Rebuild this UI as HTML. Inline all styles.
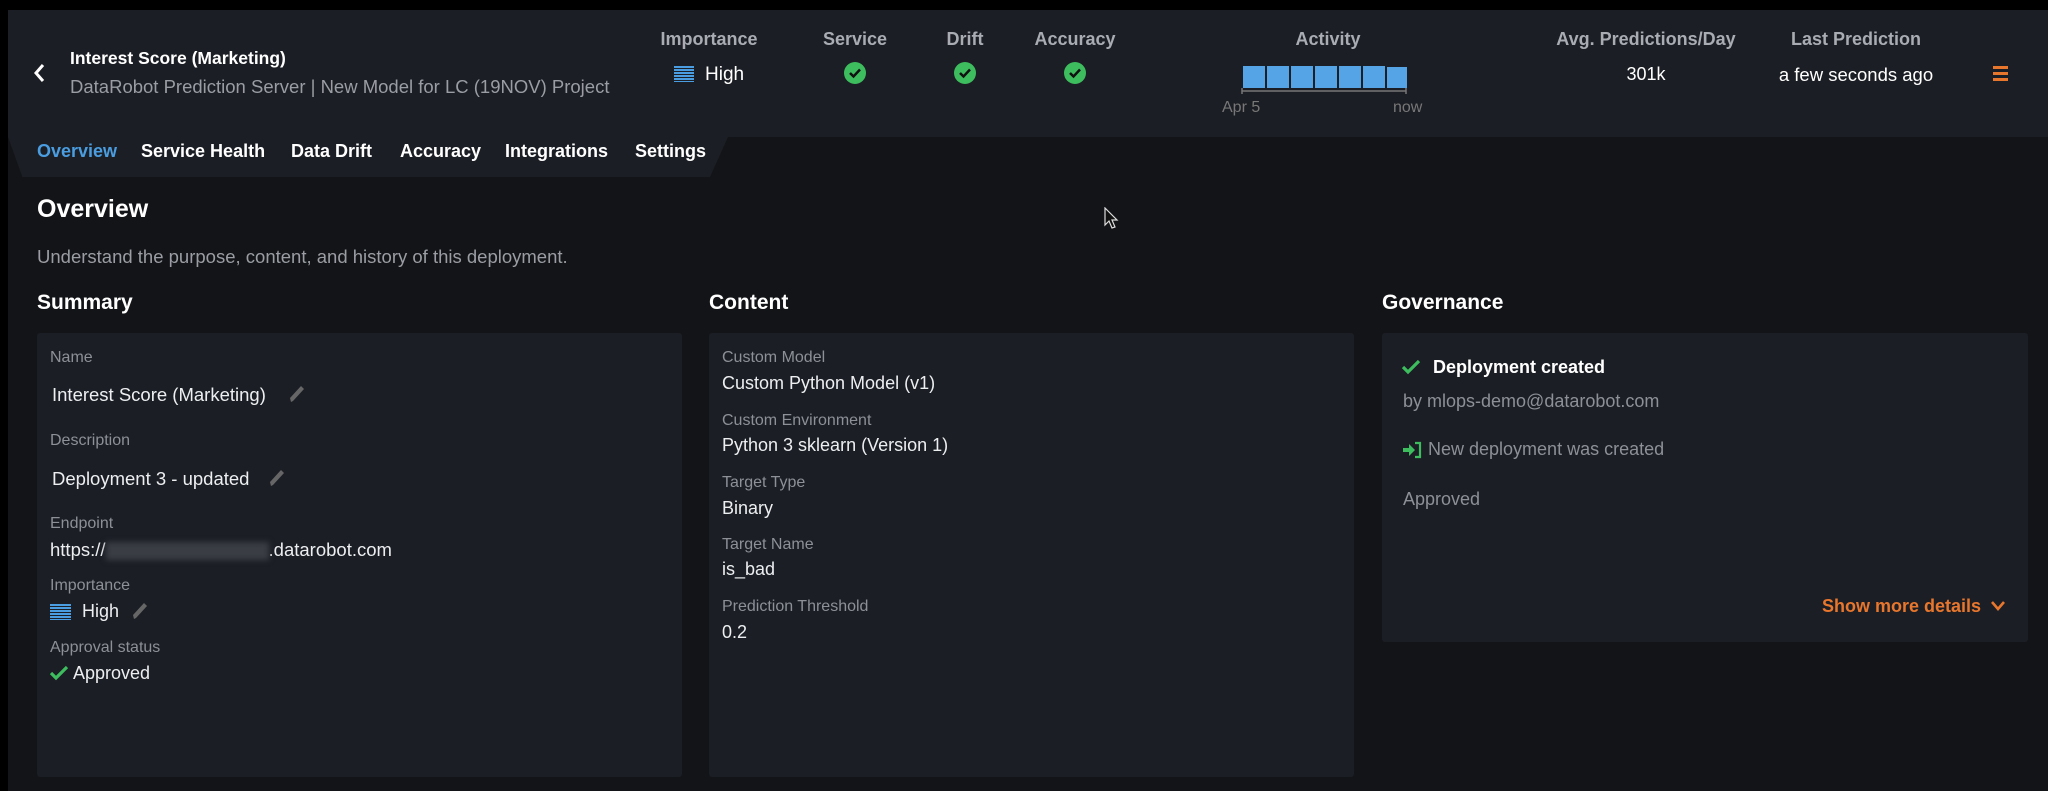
<!DOCTYPE html>
<html><head><meta charset="utf-8"><style>
*{margin:0;padding:0;box-sizing:border-box}
body{width:2048px;height:791px;background:#000;position:relative;overflow:hidden;font-family:"Liberation Sans",sans-serif;color:#e8e9eb}
.a{position:absolute;white-space:nowrap}
.main{position:absolute;left:8px;top:10px;right:0;bottom:0;background:#131417}
.hdr{position:absolute;left:8px;top:10px;right:0;height:127px;background:#1b1e24}
.tabs{position:absolute;left:8px;top:137px;width:720px;height:40px;background:#1b1e24;clip-path:polygon(0 0,100% 0,97.5% 100%,2% 100%)}
.lbl{color:#a9acb2;font-size:18px;font-weight:bold;text-align:center}
.card{position:absolute;background:#1b1e25;border-radius:3px}
.cl{color:#8d9097;font-size:16px}
.cv{color:#eceef0;font-size:18px}
.tab{font-size:18px;font-weight:bold;color:#fff;top:141px}
</style></head><body>
<div class="main"></div>
<div class="hdr"></div>
<div class="tabs"></div>

<svg class="a" style="left:32px;top:63px" width="14" height="20"><path d="M11 2 L4 10 L11 18" stroke="#fff" stroke-width="3" fill="none"/></svg>
<div class="a" style="left:70px;top:48px;font-size:17.5px;font-weight:bold;color:#fff">Interest Score (Marketing)</div>
<div class="a" style="left:70px;top:76px;font-size:18.5px;color:#9a9da3">DataRobot Prediction Server | New Model for LC (19NOV) Project</div>

<div class="a lbl" style="left:649px;top:29px;width:120px">Importance</div>
<div class="a" style="left:674px;top:66px;width:20px;height:16px;background:repeating-linear-gradient(#4a9de0 0 2px,#1b1e24 2px 3px)"></div>
<div class="a" style="left:705px;top:64px;font-size:19px;color:#fff">High</div>
<div class="a lbl" style="left:795px;top:29px;width:120px">Service</div>
<div class="a" style="left:844px;top:62px"><svg width="22" height="22"><circle cx="11" cy="11" r="11" fill="#3dbd5d"/><path d="M6 11 L9.5 14.5 L16 7.5" stroke="#111" stroke-width="2.5" fill="none"/></svg></div>
<div class="a lbl" style="left:905px;top:29px;width:120px">Drift</div>
<div class="a" style="left:954px;top:62px"><svg width="22" height="22"><circle cx="11" cy="11" r="11" fill="#3dbd5d"/><path d="M6 11 L9.5 14.5 L16 7.5" stroke="#111" stroke-width="2.5" fill="none"/></svg></div>
<div class="a lbl" style="left:1015px;top:29px;width:120px">Accuracy</div>
<div class="a" style="left:1064px;top:62px"><svg width="22" height="22"><circle cx="11" cy="11" r="11" fill="#3dbd5d"/><path d="M6 11 L9.5 14.5 L16 7.5" stroke="#111" stroke-width="2.5" fill="none"/></svg></div>
<div class="a lbl" style="left:1268px;top:29px;width:120px">Activity</div>
<svg class="a" style="left:1240px;top:64px" width="168" height="30">
<g fill="#55a4e6"><rect x="3" y="2" width="22" height="22"/><rect x="27" y="2" width="22" height="22"/><rect x="51" y="2" width="22" height="22"/><rect x="75" y="2" width="22" height="22"/><rect x="99" y="2" width="22" height="22"/><rect x="123" y="2" width="22" height="22"/><rect x="147" y="3" width="20" height="21"/></g>
<path d="M2 24 V30 M2 27 H166 M166 24 V30" stroke="#777" stroke-width="1.5" fill="none"/></svg>
<div class="a" style="left:1222px;top:99px;font-size:16px;color:#777">Apr 5</div>
<div class="a" style="left:1393px;top:99px;font-size:16px;color:#777">now</div>
<div class="a lbl" style="left:1546px;top:29px;width:200px">Avg. Predictions/Day</div>
<div class="a" style="left:1596px;top:64px;width:100px;text-align:center;font-size:18px;color:#fff">301k</div>
<div class="a lbl" style="left:1756px;top:29px;width:200px">Last Prediction</div>
<div class="a" style="left:1756px;top:64px;width:200px;text-align:center;font-size:18.5px;color:#fff">a few seconds ago</div>
<div class="a" style="left:1993px;top:66px;width:15px;height:15px;background:repeating-linear-gradient(#e8762c 0 3px,transparent 3px 6px)"></div>

<div class="a tab" style="left:37px;color:#4a9de0">Overview</div>
<div class="a tab" style="left:141px">Service Health</div>
<div class="a tab" style="left:291px">Data Drift</div>
<div class="a tab" style="left:400px">Accuracy</div>
<div class="a tab" style="left:505px">Integrations</div>
<div class="a tab" style="left:635px">Settings</div>

<svg class="a" style="left:1104px;top:207px" width="16" height="24"><path d="M1 1 L1 18 L5 14 L8 21 L11 20 L8 13 L13 13 Z" fill="#111" stroke="#ddd" stroke-width="1.2"/></svg>

<div class="a" style="left:37px;top:195px;font-size:25px;font-weight:bold;color:#fff">Overview</div>
<div class="a" style="left:37px;top:246px;font-size:18.5px;color:#9a9da3">Understand the purpose, content, and history of this deployment.</div>
<div class="a" style="left:37px;top:291px;font-size:21px;font-weight:bold;color:#fff">Summary</div>
<div class="a" style="left:709px;top:291px;font-size:21px;font-weight:bold;color:#fff">Content</div>
<div class="a" style="left:1382px;top:291px;font-size:21px;font-weight:bold;color:#fff">Governance</div>

<div class="card" style="left:37px;top:333px;width:645px;height:444px"></div>
<div class="card" style="left:709px;top:333px;width:645px;height:444px"></div>
<div class="card" style="left:1382px;top:333px;width:646px;height:309px"></div>

<div class="a cl" style="left:50px;top:349px">Name</div>
<div class="a cv" style="left:52px;top:384px;font-size:18.5px">Interest Score (Marketing)</div>
<div class="a" style="left:287px;top:383px"><svg width="20" height="22"><path d="M4 19 L3 15 L14 3 L17 6 L6 18 Z" fill="#666"/></svg></div>
<div class="a cl" style="left:50px;top:432px">Description</div>
<div class="a cv" style="left:52px;top:468px;font-size:18.5px">Deployment 3 - updated</div>
<div class="a" style="left:267px;top:467px"><svg width="20" height="22"><path d="M4 19 L3 15 L14 3 L17 6 L6 18 Z" fill="#666"/></svg></div>
<div class="a cl" style="left:50px;top:515px">Endpoint</div>
<div class="a cv" style="left:50px;top:539px;font-size:18.5px">https://<span style="display:inline-block;width:163px;height:18px;background:#3a3d44;filter:blur(3px);vertical-align:middle"></span>.datarobot.com</div>
<div class="a cl" style="left:50px;top:577px">Importance</div>
<div class="a" style="left:50px;top:604px;width:21px;height:16px;background:repeating-linear-gradient(#4a9de0 0 2px,#1b1e25 2px 3px)"></div>
<div class="a cv" style="left:82px;top:601px">High</div>
<div class="a" style="left:130px;top:600px"><svg width="20" height="22"><path d="M4 19 L3 15 L14 3 L17 6 L6 18 Z" fill="#666"/></svg></div>
<div class="a cl" style="left:50px;top:639px">Approval status</div>
<svg class="a" style="left:49px;top:664px" width="20" height="18"><path d="M2 9 L7 14 L18 3" stroke="#3dbd5d" stroke-width="3.2" fill="none"/></svg>
<div class="a cv" style="left:73px;top:663px">Approved</div>

<div class="a cl" style="left:722px;top:349px">Custom Model</div>
<div class="a cv" style="left:722px;top:373px">Custom Python Model (v1)</div>
<div class="a cl" style="left:722px;top:412px">Custom Environment</div>
<div class="a cv" style="left:722px;top:435px">Python 3 sklearn (Version 1)</div>
<div class="a cl" style="left:722px;top:474px">Target Type</div>
<div class="a cv" style="left:722px;top:498px">Binary</div>
<div class="a cl" style="left:722px;top:536px">Target Name</div>
<div class="a cv" style="left:722px;top:559px">is_bad</div>
<div class="a cl" style="left:722px;top:598px">Prediction Threshold</div>
<div class="a cv" style="left:722px;top:622px">0.2</div>

<svg class="a" style="left:1401px;top:358px" width="20" height="18"><path d="M2 9 L7 14 L18 3" stroke="#3dbd5d" stroke-width="3.2" fill="none"/></svg>
<div class="a" style="left:1433px;top:357px;font-size:18px;font-weight:bold;color:#fff">Deployment created</div>
<div class="a" style="left:1403px;top:391px;font-size:18px;color:#8d9097">by mlops-demo@datarobot.com</div>
<svg class="a" style="left:1402px;top:441px" width="20" height="18"><path d="M1 7 H7 V3 L13 9 L7 15 V11 H1 Z" fill="#3dbd5d"/><path d="M13 2 H18 V16 H13" stroke="#3dbd5d" stroke-width="2.2" fill="none"/></svg>
<div class="a" style="left:1428px;top:439px;font-size:18px;color:#8d9097">New deployment was created</div>
<div class="a" style="left:1403px;top:489px;font-size:18px;color:#8d9097">Approved</div>
<div class="a" style="left:1822px;top:596px;font-size:18px;font-weight:bold;color:#e8762c">Show more details</div>
<svg class="a" style="left:1990px;top:600px" width="16" height="12"><path d="M2 2 L8 9 L14 2" stroke="#e8762c" stroke-width="2.6" fill="none"/></svg>
</body></html>
